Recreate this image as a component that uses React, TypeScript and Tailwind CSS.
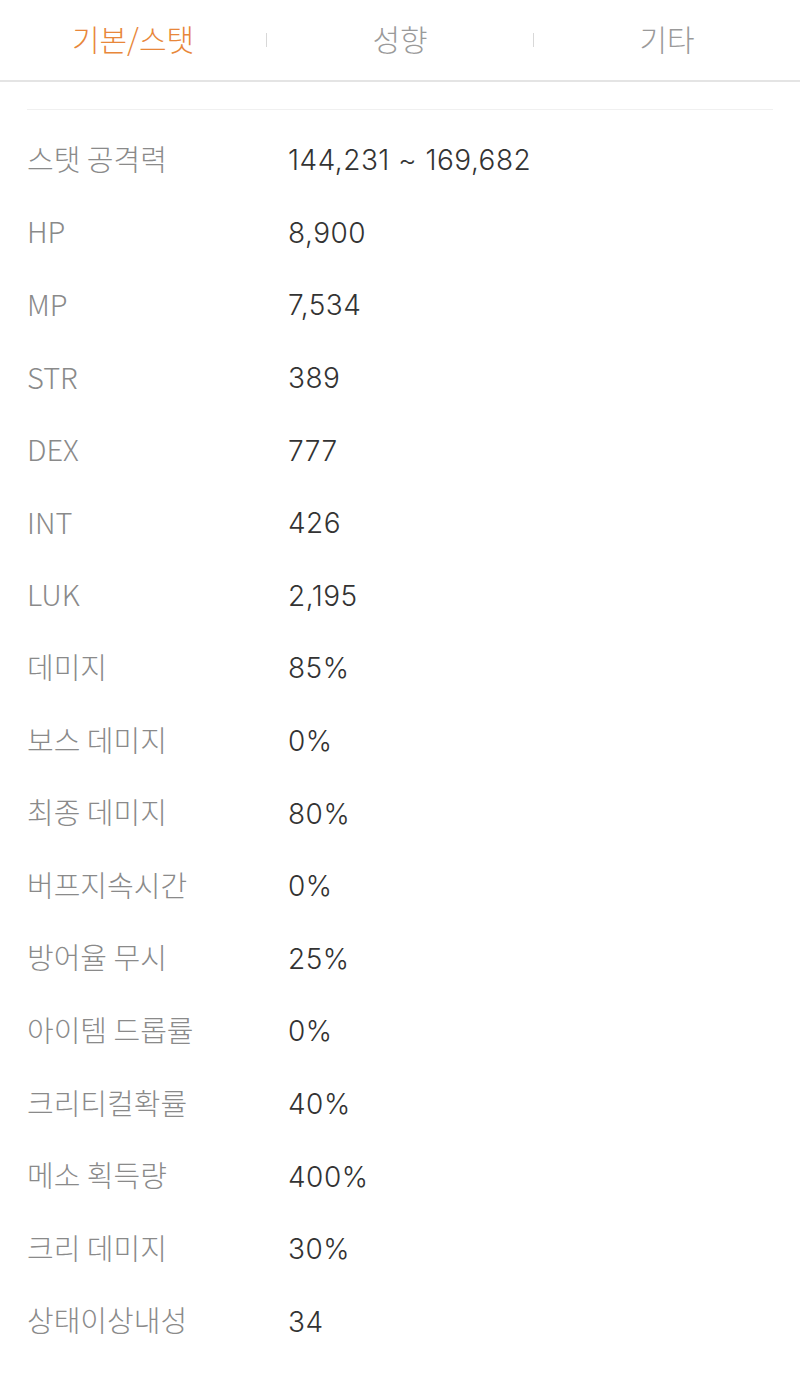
import React from "react";

const rows: [string, string][] = [
  ["스탯 공격력", "144,231 ~ 169,682"],
  ["HP", "8,900"],
  ["MP", "7,534"],
  ["STR", "389"],
  ["DEX", "777"],
  ["INT", "426"],
  ["LUK", "2,195"],
  ["데미지", "85%"],
  ["보스 데미지", "0%"],
  ["최종 데미지", "80%"],
  ["버프지속시간", "0%"],
  ["방어율 무시", "25%"],
  ["아이템 드롭률", "0%"],
  ["크리티컬확률", "40%"],
  ["메소 획득량", "400%"],
  ["크리 데미지", "30%"],
  ["상태이상내성", "34"],
];

export default function App() {
  return (
    <div
      className="w-[800px] h-[1379px] bg-white overflow-hidden"
      style={{ fontFamily: '"Noto Sans CJK KR", "Noto Sans", sans-serif' }}
    >
      <div className="h-[82px] flex items-center pb-[4px] border-b-2 border-[#e4e4e4]">
        <div className="flex-1 flex justify-center text-[30px] font-light text-[#e8873a]">기본/스탯</div>
        <div className="w-px h-[14px] mt-[4px] bg-[#d8d8d8]" />
        <div className="flex-1 flex justify-center text-[30px] font-light text-[#9a9a9a]">성향</div>
        <div className="w-px h-[14px] mt-[4px] bg-[#d8d8d8]" />
        <div className="flex-1 flex justify-center text-[30px] font-light text-[#9a9a9a]">기타</div>
      </div>
      <div className="px-[27px] pt-[27px]">
        <div className="h-px bg-[#f0f0f0]" />
        <div className="pt-[14px]">
          {rows.map(([k, v]) => (
            <div key={k} className="h-[72.6px] flex items-center">
              <div className="w-[261px] pb-[4px] text-[29px] font-light text-[#8a8a8a] leading-none">{k}</div>
              <div
                className="text-[28px] font-light tracking-[0.5px] text-[#333333] leading-none"
                style={{ fontFamily: 'Inter, "Noto Sans CJK KR", sans-serif' }}
              >
                {v}
              </div>
            </div>
          ))}
        </div>
      </div>
    </div>
  );
}
